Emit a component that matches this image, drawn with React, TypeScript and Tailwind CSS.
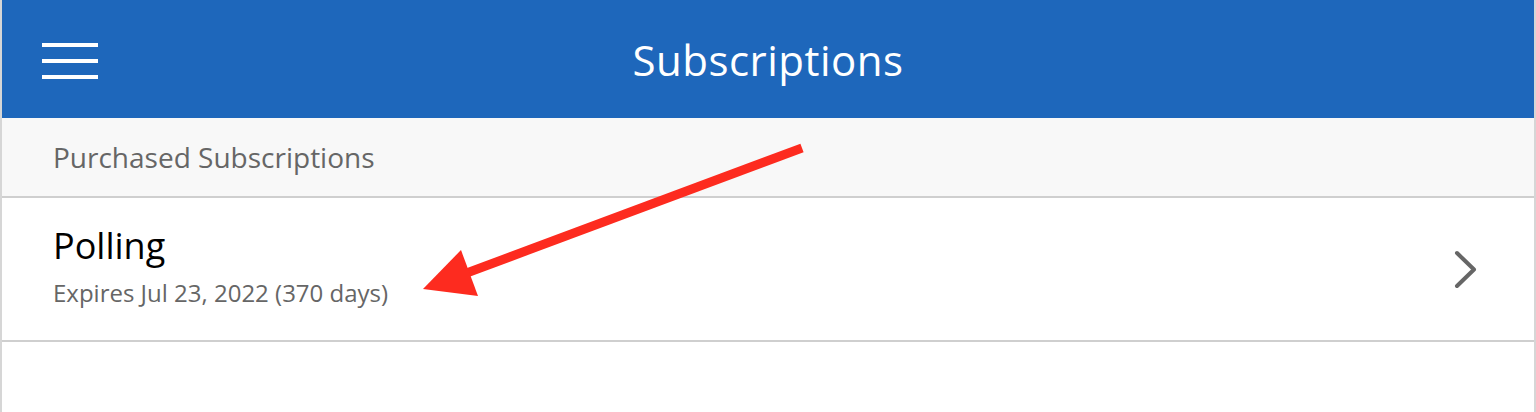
function MenuIcon() {
  return (
    <div className="flex flex-col gap-3 w-[56px] mt-[3px]">
      <span className="block h-1 bg-white" />
      <span className="block h-1 bg-white" />
      <span className="block h-1 bg-white" />
    </div>
  );
}

function Chevron() {
  return (
    <svg width="24" height="39" viewBox="0 0 24 39" fill="none">
      <polyline
        points="3,3 20,19.5 3,36"
        stroke="#666666"
        strokeWidth="4"
        strokeLinecap="round"
        strokeLinejoin="round"
      />
    </svg>
  );
}

function Arrow() {
  return (
    <svg
      className="absolute left-0 top-0 pointer-events-none"
      width="1536"
      height="412"
      viewBox="0 0 1536 412"
    >
      <line x1="800" y1="148" x2="462" y2="274" stroke="#fd2b1f" strokeWidth="9" />
      <polygon points="421,289 459,250 476,296" fill="#fd2b1f" />
    </svg>
  );
}

export default function App() {
  return (
    <div
      className="relative w-full h-[412px] bg-white border-x-2 border-[#d6d6d6] overflow-hidden"
      style={{ fontFamily: '"Open Sans", "Liberation Sans", sans-serif' }}
    >
      <header className="relative flex items-center h-[118px] bg-[#1e67bb] pl-[40px]">
        <MenuIcon />
        <h1 className="absolute inset-0 flex items-center justify-center text-white text-[42px] font-medium tracking-[0.5px]">
          Subscriptions
        </h1>
      </header>

      <div className="flex items-center h-[80px] pl-[51px] bg-[#f8f8f8] border-b-2 border-[#cfcfcf] text-[28px] text-[#666666]">
        Purchased Subscriptions
      </div>

      <div className="flex items-center justify-between h-[144px] pl-[51px] pr-[56px] border-b-2 border-[#cfcfcf]">
        <div className="flex flex-col gap-[6px] pb-[6px]">
          <span className="text-[36px] leading-[48px] text-black">Polling</span>
          <span className="text-[24px] leading-[34px] text-[#666666]">
            Expires Jul 23, 2022 (370 days)
          </span>
        </div>
        <Chevron />
      </div>

      <Arrow />
    </div>
  );
}
